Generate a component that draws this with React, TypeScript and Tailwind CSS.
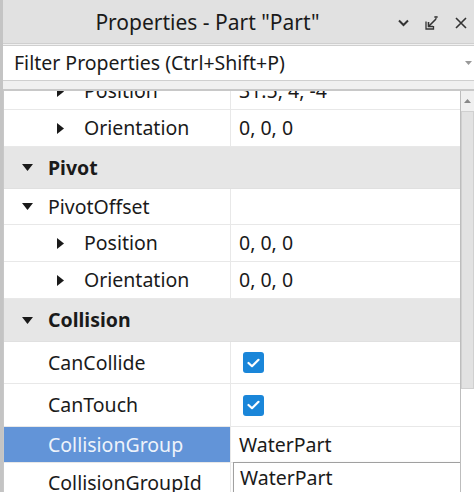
import React from 'react';

type Row = {
    name: string;
    value?: string;
    level: 0 | 1 | 2;
    kind: 'header' | 'item';
    arrow?: 'down' | 'right';
    check?: boolean;
    selected?: boolean;
    h: number;
};

const rows: Row[] = [
    { name: 'Position', value: '31.5, 4, -4', level: 2, kind: 'item', arrow: 'right', h: 37 },
    { name: 'Orientation', value: '0, 0, 0', level: 2, kind: 'item', arrow: 'right', h: 37 },
    { name: 'Pivot', level: 0, kind: 'header', arrow: 'down', h: 42 },
    { name: 'PivotOffset', value: '', level: 1, kind: 'item', arrow: 'down', h: 36 },
    { name: 'Position', value: '0, 0, 0', level: 2, kind: 'item', arrow: 'right', h: 37 },
    { name: 'Orientation', value: '0, 0, 0', level: 2, kind: 'item', arrow: 'right', h: 37 },
    { name: 'Collision', level: 0, kind: 'header', arrow: 'down', h: 43 },
    { name: 'CanCollide', level: 1, kind: 'item', check: true, h: 42 },
    { name: 'CanTouch', level: 1, kind: 'item', check: true, h: 43 },
    { name: 'CollisionGroup', value: 'WaterPart', level: 1, kind: 'item', selected: true, h: 36 },
    { name: 'CollisionGroupId', value: '', level: 1, kind: 'item', h: 40 },
];

const Arrow = ({ dir }: { dir: 'down' | 'right' }) =>
    dir === 'down' ? (
        <svg width="11" height="7" viewBox="0 0 11 7"><path d="M0 0 L11 0 L5.5 7 Z" fill="#1a1a1a" /></svg>
    ) : (
        <svg width="7" height="11" viewBox="0 0 7 11"><path d="M0 0 L7 5.5 L0 11 Z" fill="#1a1a1a" /></svg>
    );

const Check = () => (
    <span className="w-[21px] h-[21px] rounded-[3px] bg-[#1a86d9] flex items-center justify-center">
        <svg width="13" height="10" viewBox="0 0 13 10">
            <path d="M1.5 5 L5 8.2 L11.5 1.8" stroke="white" strokeWidth="2.2" fill="none" strokeLinecap="round" strokeLinejoin="round" />
        </svg>
    </span>
);

export default function App() {
    return (
        <div className="w-[474px] h-[492px] overflow-hidden bg-[#f0f0f0] border-l-[3px] border-[#c4c4c4] flex flex-col text-[#1a1a1a]" style={{ fontFamily: '"Noto Sans", "Open Sans", sans-serif' }}>
            <div className="h-[44px] shrink-0 bg-[#e1e1e1] border-b border-[#cfcfcf] flex items-center relative">
                <div className="flex-1 text-center text-[21px] pr-[62px] pt-[2px] whitespace-nowrap">Properties - Part "Part"</div>
                <div className="absolute right-[7px] top-[16px] flex items-center gap-[16px]">
                    <svg width="11" height="8" viewBox="0 0 11 8"><path d="M1 1.5 L5.5 6 L10 1.5" stroke="#333" strokeWidth="2" fill="none" /></svg>
                    <svg width="14" height="14" viewBox="0 0 14 14">
                        <path d="M1 5.5 V13 H8.5 V10" stroke="#333" strokeWidth="1.3" fill="none" />
                        <path d="M4 10 L11 3" stroke="#333" strokeWidth="1.6" />
                        <path d="M3.5 6 V10.5 H8" stroke="#333" strokeWidth="1.6" fill="none" />
                        <path d="M9 1 L13 1 M11 0 V3" stroke="#333" strokeWidth="1.2" />
                    </svg>
                    <svg width="12" height="12" viewBox="0 0 12 12"><path d="M1 1 L11 11 M11 1 L1 11" stroke="#333" strokeWidth="1.6" /></svg>
                </div>
            </div>
            <div className="h-[36px] shrink-0 bg-white border-y border-[#cfcfcf] flex items-center pl-[11px] text-[19.5px] relative mt-[1px] whitespace-nowrap">
                Filter Properties (Ctrl+Shift+P)
                <svg className="absolute right-[2px] top-[15px]" width="7" height="4" viewBox="0 0 7 4"><path d="M0 0 H7 L3.5 4 Z" fill="#999" /></svg>
            </div>
            <div className="h-[8px] shrink-0" />
            <div className="flex-1 flex min-h-0 border-t-2 border-l border-[#c8c8c8] bg-white">
                <div className="w-[457px] border-r border-[#bdbdbd] overflow-hidden relative">
                    <div className="mt-[-18px]">
                        {rows.map((r, i) =>
                            r.kind === 'header' ? (
                                <div key={i} className="flex items-center bg-[#e6e6e6] border-b border-[#e0e0e0] font-bold text-[19.5px]" style={{ height: r.h }}>
                                    <span className="w-[44px] flex justify-center pl-[2px]">{r.arrow && <Arrow dir={r.arrow} />}</span>
                                    <span>{r.name}</span>
                                </div>
                            ) : (
                                <div key={i} className="flex border-b border-[#e8e8e8] text-[19.5px]" style={{ height: r.h }}>
                                    <div className={`w-[227px] flex items-center border-r border-[#e8e8e8] ${r.selected ? 'bg-[#6294d8] text-[#eef3fb]' : ''}`}>
                                        {r.level === 2 ? (
                                            <>
                                                <span className="w-[80px] flex justify-end pr-[20px]"><Arrow dir="right" /></span>
                                                <span>{r.name}</span>
                                            </>
                                        ) : (
                                            <>
                                                <span className="w-[44px] flex justify-center pl-[2px]">{r.arrow && <Arrow dir={r.arrow} />}</span>
                                                <span>{r.name}</span>
                                            </>
                                        )}
                                    </div>
                                    <div className="flex-1 flex items-center pl-[8px]">
                                        {r.check ? <span className="pl-[4px]"><Check /></span> : r.value}
                                    </div>
                                </div>
                            )
                        )}
                    </div>
                    <div className="absolute left-[229px] top-[371px] w-[230px] h-[40px] bg-white border border-[#a0a0a0] shadow-[3px_3px_4px_rgba(0,0,0,0.45)] pl-[6px] text-[19.5px]">
                        WaterPart
                    </div>
                </div>
                <div className="flex-1 flex flex-col bg-[#f0f0f0]">
                    <div className="h-[20px] flex items-center justify-center">
                        <svg width="7" height="4" viewBox="0 0 7 4"><path d="M0 4 H7 L3.5 0 Z" fill="#888" /></svg>
                    </div>
                    <div className="h-[278px] bg-[#e2e2e2] border border-[#d0d0d0]" />
                    <div className="flex-1 bg-white" />
                </div>
            </div>
        </div>
    );
}
